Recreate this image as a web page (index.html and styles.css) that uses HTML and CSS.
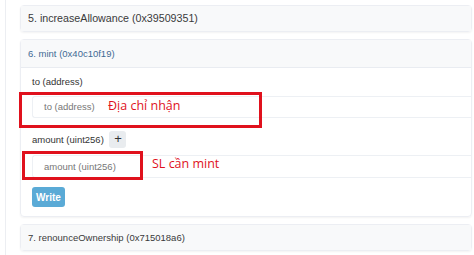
FILE: index.html
```html
<!DOCTYPE html>
<html lang="vi">
<head>
    <meta charset="UTF-8">
    <meta name="viewport" content="width=device-width, initial-scale=1.0">
    <title>Write Contract</title>
    <link rel="stylesheet" href="styles.css">
</head>
<body>
    <div class="page">
        <!-- 5 -->
        <div class="card">
            <div class="card-header first">5. increaseAllowance (0x39509351)</div>
        </div>

        <!-- 6: mint -->
        <div class="card">
            <div class="card-header active">6. mint (0x40c10f19)</div>
            <div class="card-body">
                <div class="field-label">to (address)</div>
                <div class="input">to (address)</div>
                <div class="field-label">amount (uint256) <span class="plus">+</span></div>
                <div class="input input-amount">amount (uint256)</div>
                <button class="write-btn">Write</button>

                <!-- chú thích đỏ -->
                <div class="mark mark-to"></div>
                <div class="note note-to">Địa chỉ nhận</div>
                <div class="mark mark-amount"></div>
                <div class="note note-amount">SL cần mint</div>
            </div>
        </div>

        <!-- 7 -->
        <div class="card">
            <div class="card-header">7. renounceOwnership (0x715018a6)</div>
        </div>
    </div>
</body>
</html>
```

FILE: styles.css
```css
body {
    margin: 0;
    background: #fff;
    font-family: "Liberation Sans", Arial, sans-serif;
    color: #333;
}
.page {
    margin-left: 5px;
    border-left: 1px solid #eceef2;
    padding: 5px 2px 0 14px;
    height: 250px;
}
.card {
    border: 1px solid #eceef3;
    border-radius: 4px;
    margin-bottom: 7px;
    box-shadow: 0 1px 2px rgba(0, 0, 0, 0.05);
}
.card-header {
    background: #f8f9fa;
    height: 25px;
    line-height: 25px;
    padding-left: 7px;
    font-size: 9.5px;
    color: #3a3a3a;
}
.card-header.first {
    font-size: 10.7px;
}
.card-header.active {
    color: #3f6a94;
    height: 27px;
    line-height: 27px;
    border-bottom: 1px solid #e9ecf1;
}
.card-body {
    position: relative;
    padding: 7px 0 9px 11px;
}
.field-label {
    font-size: 9.5px;
    color: #333;
    height: 14px;
    line-height: 14px;
}
.field-label + .input {
    margin-top: 7px;
}
.input + .field-label {
    margin-top: 13px;
    height: 17px;
    line-height: 17px;
}
.plus {
    display: inline-block;
    vertical-align: top;
    width: 17px;
    height: 17px;
    line-height: 16px;
    margin-left: 3px;
    text-align: center;
    background: #e9ecef;
    border-radius: 3px;
    font-size: 13px;
    color: #333;
}
.input {
    height: 20px;
    line-height: 20px;
    border: 1px solid #edf0f4;
    border-right: none;
    border-radius: 3px 0 0 3px;
    padding-left: 11px;
    font-size: 9.5px;
    color: #777;
}
.input-amount {
    margin-top: 4px;
    height: 21px;
    line-height: 21px;
}
.write-btn {
    display: block;
    margin-top: 9px;
    border: none;
    border-radius: 3px;
    background: #5aaad6;
    color: #fff;
    font-family: "Liberation Sans", Arial, sans-serif;
    font-weight: bold;
    font-size: 10px;
    height: 20px;
    width: 33px;
    padding: 0;
}
.mark {
    position: absolute;
    border: 3px solid #e0111d;
}
.mark-to {
    left: -2px;
    top: 24px;
    width: 237px;
    height: 30px;
}
.mark-amount {
    left: 1px;
    top: 83px;
    width: 115px;
    height: 23px;
}
.note {
    position: absolute;
    font-family: "Open Sans", "Noto Sans", sans-serif;
    font-size: 12.5px;
    color: #e0111d;
}
.note-to {
    left: 87px;
    top: 29px;
}
.note-amount {
    left: 131px;
    top: 87px;
}
```
